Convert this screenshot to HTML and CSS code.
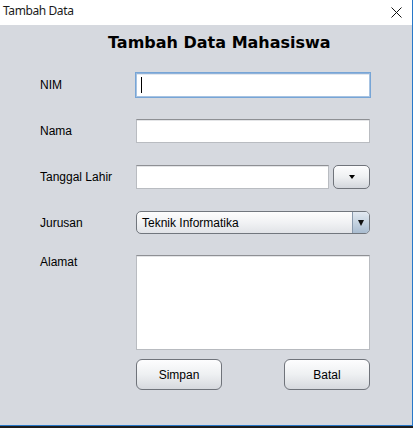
FILE: index.html
```html
<!DOCTYPE html>
<html lang="id">
<head>
<meta charset="utf-8">
<title>Tambah Data</title>
<link rel="stylesheet" href="styles.css">
</head>
<body>
<div class="window">
  <div class="titlebar">
    <span class="title">Tambah Data</span>
    <svg class="close" width="11" height="11" viewBox="0 0 11 11" aria-hidden="true">
      <path d="M0.5 0.5 L10.5 10.5 M10.5 0.5 L0.5 10.5" stroke="#111" stroke-width="1" fill="none"/>
    </svg>
  </div>
  <div class="content">
    <h1 class="heading">Tambah Data Mahasiswa</h1>
    <div class="form">
      <div class="row row-nim">
        <span class="label">NIM</span>
        <div class="field focused"><span class="caret"></span></div>
      </div>
      <div class="row row-gap">
        <span class="label">Nama</span>
        <div class="field"></div>
      </div>
      <div class="row row-gap">
        <span class="label">Tanggal Lahir</span>
        <div class="date-group">
          <div class="field date-field"></div>
          <div class="date-btn"><span class="tri-small"></span></div>
        </div>
      </div>
      <div class="row row-gap">
        <span class="label">Jurusan</span>
        <div class="combo">
          <span class="combo-text">Teknik Informatika</span>
          <span class="combo-arrow"><span class="tri"></span></span>
        </div>
      </div>
      <div class="row row-alamat">
        <span class="label label-top">Alamat</span>
        <div class="field textarea"></div>
      </div>
      <div class="row row-buttons">
        <span></span>
        <div class="buttons">
          <div class="btn">Simpan</div>
          <div class="btn">Batal</div>
        </div>
      </div>
    </div>
  </div>
</div>
</body>
</html>
```

FILE: styles.css
```css
html, body {
  margin: 0;
  padding: 0;
  height: 428px;
  overflow: hidden;
  background: #1e1e1e;
}

.window {
  width: 412px;
  height: 425px;
  border-right: 1px solid #2878c8;
  border-bottom: 1px solid #2878c8;
  display: flex;
  flex-direction: column;
  background: #d6d9df;
}

.titlebar {
  height: 25px;
  box-sizing: border-box;
  background: #ffffff;
  display: flex;
  justify-content: space-between;
  align-items: flex-start;
  padding: 3px 10px 0 3px;
}

.title {
  font-family: "Noto Sans", sans-serif;
  font-size: 12px;
  line-height: 16px;
  letter-spacing: -0.4px;
  color: #1a1a1a;
}

.close {
  display: block;
  margin-top: 4px;
}

.content {
  flex: 1;
  font-family: "Liberation Sans", Arial, sans-serif;
  font-size: 12px;
  color: #000;
}

.heading {
  margin: 0;
  padding: 8px 0 0 108px;
  font-family: "DejaVu Sans", sans-serif;
  font-weight: bold;
  font-size: 16px;
  line-height: 20px;
  color: #000;
}

.form {
  padding-left: 40px;
  margin-top: 20px;
  display: flex;
  flex-direction: column;
}

.row {
  display: grid;
  grid-template-columns: 96px 234px;
  align-items: center;
}

.row-gap {
  margin-top: 22px;
}

.row-alamat {
  margin-top: 21px;
  align-items: start;
}

.row-buttons {
  margin-top: 9px;
}

.label {
  line-height: 14px;
  white-space: nowrap;
}

.field {
  box-sizing: border-box;
  height: 24px;
  background: #ffffff;
  border: 1px solid #b9bcc1;
  border-top-color: #8e9094;
  box-shadow: inset 0 1px 0 #e4e5e7;
}

.field.focused {
  border-color: #a7c3e2;
  border-top-color: #8fb2da;
  box-shadow: 0 0 0 1px #77a5d6, inset 0 1px 0 #e4e8ee;
  display: flex;
  align-items: flex-start;
  padding: 3px 0 0 4px;
}

.caret {
  display: block;
  width: 1px;
  height: 16px;
  background: #000;
}

.date-group {
  display: flex;
  gap: 4px;
}

.date-field {
  width: 193px;
}

.date-btn {
  box-sizing: border-box;
  width: 37px;
  height: 24px;
  border: 1px solid #70747b;
  border-radius: 5px;
  background: linear-gradient(#fdfdfe, #eef0f2 50%, #d3d6dc);
  display: flex;
  align-items: center;
  justify-content: center;
}

.tri-small {
  width: 0;
  height: 0;
  border-left: 3px solid transparent;
  border-right: 3px solid transparent;
  border-top: 4px solid #000;
}

.combo {
  box-sizing: border-box;
  height: 23px;
  border: 1px solid #71767d;
  border-radius: 5px;
  background: linear-gradient(#fdfdfd, #f1f2f4 50%, #e1e3e7);
  display: flex;
  align-items: stretch;
  overflow: hidden;
}

.combo-text {
  flex: 1;
  padding-left: 5px;
  display: flex;
  align-items: center;
  line-height: 14px;
}

.combo-arrow {
  width: 16px;
  border-left: 1px solid #8898ab;
  background: linear-gradient(#e2e9f1, #c3d1df 55%, #a9bcd0);
  display: flex;
  align-items: center;
  justify-content: center;
}

.tri {
  width: 0;
  height: 0;
  border-left: 3.5px solid transparent;
  border-right: 3.5px solid transparent;
  border-top: 6px solid #111;
  margin-top: 1px;
}

.textarea {
  height: 95px;
}

.buttons {
  display: flex;
  justify-content: space-between;
}

.btn {
  box-sizing: border-box;
  width: 86px;
  height: 31px;
  border: 1px solid #6f737a;
  border-radius: 6px;
  background: linear-gradient(#fdfdfe, #eef0f2 50%, #d6d9de);
  display: flex;
  align-items: center;
  justify-content: center;
  line-height: 14px;
  padding-top: 1px;
}
```
